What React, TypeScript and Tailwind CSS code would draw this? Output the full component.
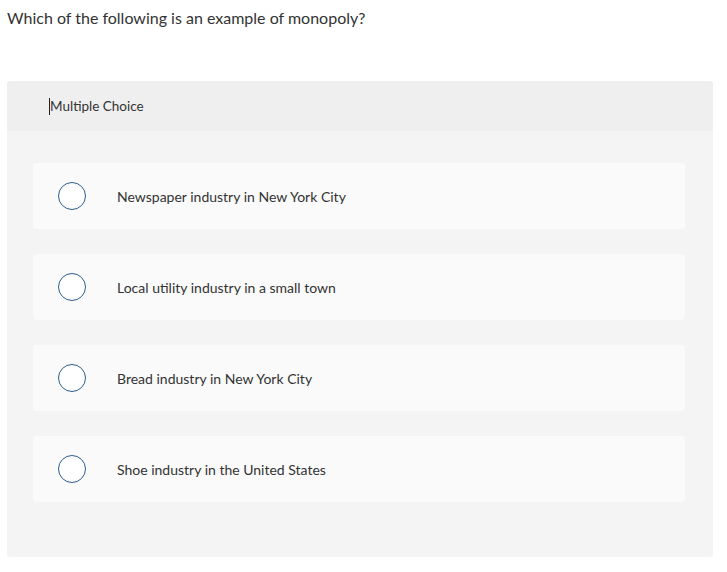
const options = [
  'Newspaper industry in New York City',
  'Local utility industry in a small town',
  'Bread industry in New York City',
  'Shoe industry in the United States',
];

export default function App() {
  return (
    <div className="min-h-[572px] w-[727px] bg-white font-['Lato','Open_Sans',sans-serif] text-[#333333]">
      <div className="px-[7px] pt-[8px] text-[16px] leading-5">Which of the following is an example of monopoly?</div>

      <div className="mx-[7px] mt-[53px] w-[706px] overflow-hidden rounded-[3px] bg-[#f4f4f4]">
        <div className="flex h-[50px] items-center bg-[#efefef] pl-[42px] text-[13.5px]">
          <span className="mr-[3px] inline-block h-[17px] w-px bg-[#222]" />
          <span className="-ml-[3px]">Multiple Choice</span>
        </div>

        <div className="flex flex-col gap-[25px] pl-[26px] pr-[28px] pb-[55px] pt-[32px]">
          {options.map((opt) => (
            <div key={opt} className="flex h-[66px] items-center rounded-[4px] bg-[#fafafa] pl-[25px]">
              <span className="h-[28px] w-[28px] shrink-0 rounded-full border-[1.5px] border-[#2c5d8c] bg-white" />
              <span className="ml-[31px] text-[14px]">{opt}</span>
            </div>
          ))}
        </div>
      </div>
    </div>
  );
}
